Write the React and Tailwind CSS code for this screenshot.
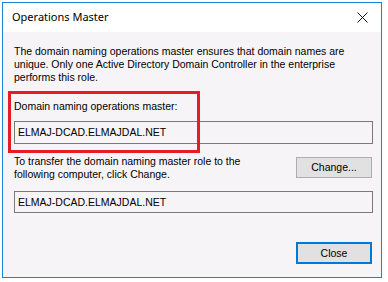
export default function App() {
  const body = { fontFamily: '"Liberation Sans", Arial, sans-serif' };

  return (
    <div className="w-[388px] h-[282px] bg-white pt-[2px] pl-[2px]">
      {/* window */}
      <div className="relative w-[380px] h-[276px] border border-[#1883d7] flex flex-col">
        {/* title bar */}
        <div className="h-[29px] bg-white flex items-center justify-between pl-[9px] pr-[10px] shrink-0">
          <span
            className="text-[11px] text-black"
            style={{ fontFamily: '"Noto Sans", "Open Sans", sans-serif' }}
          >
            Operations Master
          </span>
          <svg width="11" height="11" viewBox="0 0 11 11" className="mr-[3px]">
            <path d="M0.5 0.5 L10.5 10.5 M10.5 0.5 L0.5 10.5" stroke="#111" strokeWidth="1" />
          </svg>
        </div>

        {/* body */}
        <div
          className="flex-1 bg-[#f7f4f7] pl-[11px] pr-[8px] pt-[13px] text-[10.5px] leading-[13px] text-black"
          style={body}
        >
          <p className="w-[350px]">
            The domain naming operations master ensures that domain names are unique. Only one
            Active Directory Domain Controller in the enterprise performs this role.
          </p>

          <p className="mt-[16px]">Domain naming operations master:</p>
          <div className="mt-[8px] h-[23px] border border-[#7a7a7a] flex items-center pl-[3px]">
            ELMAJ-DCAD.ELMAJDAL.NET
          </div>

          <div className="mt-[11px] flex justify-between items-start">
            <p className="w-[240px]">
              To transfer the domain naming master role to the following computer, click Change.
            </p>
            <button className="mt-[2px] mr-[1px] w-[76px] h-[21px] bg-[#e1e1e1] border border-[#adadad] flex items-center justify-center text-[10.5px]">
              Change...
            </button>
          </div>

          <div className="mt-[10px] h-[22px] border border-[#7a7a7a] flex items-center pl-[3px]">
            ELMAJ-DCAD.ELMAJDAL.NET
          </div>

          <div className="mt-[29px] flex justify-end">
            <button className="mr-[1px] w-[76px] h-[22px] bg-[#e1e1e1] border-2 border-[#0078d7] flex items-center justify-center text-[10.5px]">
              Close
            </button>
          </div>
        </div>

        {/* red highlight annotation */}
        <div className="absolute left-[5px] top-[88px] w-[192px] h-[62px] border-[3px] border-[#e81c24] pointer-events-none" />
      </div>
    </div>
  );
}
